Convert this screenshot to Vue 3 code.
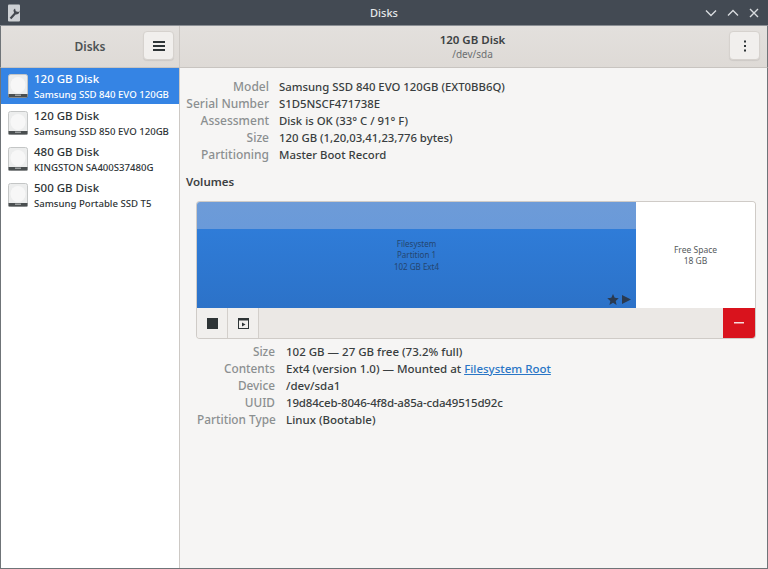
<template>
  <div class="windowFrame">
    <div class="titleBar">
      <div class="appIcon">
        <svg width="16" height="18" viewBox="0 0 16 18">
          <rect x="1" y="0.5" width="12" height="17" rx="1" fill="#ced1d4" />
          <path d="M3.5 14.5 L8.5 9" stroke="#45494f" stroke-width="2.2" fill="none" />
          <path d="M6.5 6 L8 4.5 L8.8 7.2 L11.5 8 L12.5 6.6 Q12.8 10.2 9.6 10.6 Q6.6 10 6.5 6 Z" fill="#45494f" />
        </svg>
      </div>
      <div class="windowTitle">Disks</div>
      <div class="windowControls">
        <svg width="12" height="8" viewBox="0 0 12 8"><path d="M1 1.5 L6 6.5 L11 1.5" class="ctrlStroke" /></svg>
        <svg width="12" height="8" viewBox="0 0 12 8"><path d="M1 6.5 L6 1.5 L11 6.5" class="ctrlStroke" /></svg>
        <svg width="10" height="10" viewBox="0 0 10 10"><path d="M1 1 L9 9 M9 1 L1 9" class="ctrlStroke" /></svg>
      </div>
    </div>

    <div class="headerRow">
      <div class="sideHeader">
        <span class="sideTitle">Disks</span>
        <button class="headerBtn menuBtn">
          <svg width="12" height="10" viewBox="0 0 12 10"><path d="M0 1 H12 M0 5 H12 M0 9 H12" stroke="#2e3436" stroke-width="2" /></svg>
        </button>
      </div>
      <div class="mainHeader">
        <div class="mainTitle">
          <strong>120 GB Disk</strong>
          <span>/dev/sda</span>
        </div>
        <button class="headerBtn dotsBtn">
          <svg width="4" height="12" viewBox="0 0 4 12">
            <rect x="1" y="0.5" width="2" height="2" fill="#2e3436" />
            <rect x="1" y="5" width="2" height="2" fill="#2e3436" />
            <rect x="1" y="9.5" width="2" height="2" fill="#2e3436" />
          </svg>
        </button>
      </div>
    </div>

    <div class="bodyRow">
      <div class="diskList">
        <div v-for="(disk, i) in disks" :key="i" class="diskRow" :class="{ selected: i === 0 }">
          <svg class="diskIcon" width="20" height="24" viewBox="0 0 20 24">
            <rect x="0.5" y="0.5" width="19" height="23" rx="2" fill="#eceded" stroke="#c4c6c6" />
            <ellipse cx="10" cy="11" rx="7.5" ry="8" fill="#f7f7f7" />
            <rect x="0.5" y="20" width="19" height="3.5" fill="#4a4f50" />
            <rect x="7" y="20.5" width="6" height="1.5" fill="#9a9d9e" />
          </svg>
          <div class="diskText">
            <div class="diskName">{{ disk.name }}</div>
            <div class="diskModel">{{ disk.model }}</div>
          </div>
        </div>
      </div>

      <div class="contentPane">
        <div class="infoGrid driveGrid">
          <template v-for="row in driveInfo" :key="row[0]">
            <span class="infoLabel">{{ row[0] }}</span>
            <span class="infoValue">{{ row[1] }}</span>
          </template>
        </div>

        <div class="volumesTitle">Volumes</div>

        <div class="volumeBox">
          <div class="volumeGraph">
            <div class="partUsed">
              <div class="usedTop"></div>
              <div class="usedBottom">
                <div class="partLabel">Filesystem<br />Partition 1<br />102 GB Ext4</div>
                <div class="partIcons">
                  <svg width="12" height="11" viewBox="0 0 24 23"><path d="M12 0 L15.5 8 L24 8.8 L17.6 14.5 L19.5 23 L12 18.5 L4.5 23 L6.4 14.5 L0 8.8 L8.5 8 Z" fill="#2a3a50" /></svg>
                  <svg width="9" height="9" viewBox="0 0 9 9"><path d="M0 0 L9 4.5 L0 9 Z" fill="#2a3a50" /></svg>
                </div>
              </div>
            </div>
            <div class="partFree">Free Space<br />18 GB</div>
          </div>
          <div class="volumeTools">
            <button class="toolBtn">
              <svg width="11" height="11" viewBox="0 0 11 11"><rect width="11" height="11" fill="#2e3436" /></svg>
            </button>
            <button class="toolBtn">
              <svg width="11" height="11" viewBox="0 0 11 11">
                <rect x="0.5" y="0.5" width="10" height="10" fill="none" stroke="#2e3436" />
                <rect width="11" height="2.5" fill="#2e3436" />
                <path d="M4 4.5 L7.5 6.5 L4 8.5 Z" fill="#2e3436" />
              </svg>
            </button>
            <div class="toolSpacer"></div>
            <button class="deleteBtn">
              <svg width="10" height="2" viewBox="0 0 10 2"><rect width="10" height="1.5" fill="#f6dcdc" /></svg>
            </button>
          </div>
        </div>

        <div class="infoGrid volumeGrid">
          <span class="infoLabel">Size</span>
          <span class="infoValue">102 GB — 27 GB free (73.2% full)</span>
          <span class="infoLabel">Contents</span>
          <span class="infoValue">Ext4 (version 1.0) — Mounted at <a class="linkText">Filesystem Root</a></span>
          <span class="infoLabel">Device</span>
          <span class="infoValue">/dev/sda1</span>
          <span class="infoLabel">UUID</span>
          <span class="infoValue uuidText">19d84ceb-8046-4f8d-a85a-cda49515d92c</span>
          <span class="infoLabel">Partition Type</span>
          <span class="infoValue">Linux (Bootable)</span>
        </div>
      </div>
    </div>
  </div>
</template>

<script setup>
const disks = [
  { name: '120 GB Disk', model: 'Samsung SSD 840 EVO 120GB' },
  { name: '120 GB Disk', model: 'Samsung SSD 850 EVO 120GB' },
  { name: '480 GB Disk', model: 'KINGSTON SA400S37480G' },
  { name: '500 GB Disk', model: 'Samsung Portable SSD T5' }
]

const driveInfo = [
  ['Model', 'Samsung SSD 840 EVO 120GB (EXT0BB6Q)'],
  ['Serial Number', 'S1D5NSCF471738E'],
  ['Assessment', 'Disk is OK (33° C / 91° F)'],
  ['Size', '120 GB (1,20,03,41,23,776 bytes)'],
  ['Partitioning', 'Master Boot Record']
]
</script>

<style>
html,
body {
  margin: 0;
  background: #f6f5f4;
}
</style>

<style scoped>
.windowFrame {
  width: 768px;
  height: 569px;
  display: flex;
  flex-direction: column;
  overflow: hidden;
  font-family: 'Noto Sans', sans-serif;
  font-size: 12px;
  color: #2e3436;
  background: #f6f5f4;
}

/* title bar */
.titleBar {
  height: 25px;
  flex: none;
  background: #434a53;
  border-bottom: 1px solid #8b8f94;
  display: flex;
  align-items: center;
  position: relative;
}

.appIcon {
  margin-left: 7px;
  display: flex;
}

.windowTitle {
  position: absolute;
  left: 0;
  right: 0;
  text-align: center;
  color: #e6e8ea;
  font-size: 11px;
  font-weight: 500;
}

.windowControls {
  margin-left: auto;
  margin-right: 9px;
  display: flex;
  align-items: center;
  gap: 10px;
  position: relative;
}

.ctrlStroke {
  stroke: #d8dbde;
  stroke-width: 1.4;
  fill: none;
}

/* header */
.headerRow {
  height: 41px;
  flex: none;
  display: flex;
  background: linear-gradient(#e3e0dd, #dedad6);
  border-bottom: 1px solid #c8c4c0;
  border-left: 1px solid #6f7478;
  border-right: 1px solid #6f7478;
}

.sideHeader {
  width: 179px;
  box-sizing: border-box;
  flex: none;
  display: flex;
  align-items: center;
  justify-content: center;
  position: relative;
  border-right: 1px solid #cdc9c5;
}

.sideTitle {
  font-size: 12px;
  font-weight: 600;
  color: #4d5254;
}

.headerBtn {
  position: absolute;
  width: 31px;
  height: 29px;
  padding: 0;
  background: #f1efed;
  border: 1px solid #d6d2ce;
  border-radius: 4px;
  box-shadow: 0 1px 1px rgba(0, 0, 0, 0.08);
  display: flex;
  align-items: center;
  justify-content: center;
}

.menuBtn {
  right: 5px;
  top: 5px;
}

.mainHeader {
  flex: 1;
  display: flex;
  align-items: center;
  justify-content: center;
  position: relative;
}

.mainTitle {
  display: flex;
  flex-direction: column;
  align-items: center;
  line-height: 15px;
  margin-right: 2px;
}

.mainTitle strong {
  font-size: 11.5px;
  font-weight: 600;
  color: #3c4143;
}

.mainTitle span {
  font-size: 10px;
  color: #6b6f70;
}

.dotsBtn {
  right: 7px;
  top: 5px;
}

/* body */
.bodyRow {
  flex: 1;
  display: flex;
  min-height: 0;
  border-left: 1px solid #6f7478;
  border-right: 1px solid #6f7478;
  border-bottom: 1px solid #6f7478;
}

.diskList {
  width: 178px;
  flex: none;
  background: #fff;
  border-right: 1px solid #cdc9c5;
}

.diskRow {
  height: 36.4px;
  display: flex;
  align-items: center;
  box-sizing: border-box;
  padding-left: 7px;
  color: #2e3436;
}

.diskRow.selected {
  background: #3584e4;
  color: #fff;
}

.diskIcon {
  flex: none;
  margin-right: 6px;
}

.diskName {
  font-size: 11.5px;
  font-weight: 500;
  line-height: 17px;
}

.diskModel {
  font-size: 9.6px;
  font-weight: 500;
  line-height: 15px;
  white-space: nowrap;
}

.contentPane {
  flex: 1;
  min-width: 0;
  padding: 10px 11px 0 6px;
}

.infoGrid {
  display: grid;
  grid-auto-rows: 17px;
  column-gap: 10px;
  align-items: center;
  font-size: 11.5px;
  line-height: 17px;
}

.driveGrid {
  grid-template-columns: 83px auto;
  font-size: 11.35px;
}

.driveGrid .infoLabel {
  font-size: 12px;
}

.volumeGrid {
  grid-template-columns: 78px auto;
  padding-left: 11px;
  margin-top: 5px;
  column-gap: 11px;
}

.volumeGrid .infoLabel {
  font-size: 11.8px;
}

.infoLabel {
  text-align: right;
  color: #8b8f90;
  font-weight: 500;
  white-space: nowrap;
}

.infoValue {
  color: #393e40;
  font-weight: 500;
  white-space: nowrap;
}

.uuidText {
  letter-spacing: -0.17px;
}

.linkText {
  color: #2a76c6;
  text-decoration: underline;
}

.volumesTitle {
  margin-top: 10px;
  font-size: 11.5px;
  font-weight: 600;
  color: #3c4143;
  line-height: 17px;
}

/* volume graph */
.volumeBox {
  margin: 12px 0 0 11px;
  width: 558px;
  height: 136px;
  display: flex;
  flex-direction: column;
  border-radius: 3px;
  box-shadow: 0 0 0 1px #cfcbc7;
  overflow: hidden;
}

.volumeGraph {
  height: 106px;
  flex: none;
  display: flex;
}

.partUsed {
  width: 439px;
  flex: none;
  display: flex;
  flex-direction: column;
}

.usedTop {
  height: 27px;
  flex: none;
  background: linear-gradient(#6d9bd8, #6a9ad9);
}

.usedBottom {
  flex: 1;
  position: relative;
  background: linear-gradient(#2f7cd8, #2c72c8);
  display: flex;
  align-items: center;
  justify-content: center;
}

.partLabel {
  margin-top: -27px;
  text-align: center;
  font-size: 8px;
  line-height: 11.5px;
  color: #24456f;
}

.partIcons {
  position: absolute;
  right: 5px;
  bottom: 3px;
  display: flex;
  align-items: center;
  gap: 3px;
}

.partFree {
  flex: 1;
  background: #fff;
  display: flex;
  align-items: center;
  justify-content: center;
  text-align: center;
  font-size: 8.5px;
  line-height: 11.5px;
  color: #55595b;
}

.volumeTools {
  flex: 1;
  display: flex;
  background: #ebe8e5;
}

.toolBtn {
  width: 31px;
  padding: 0;
  background: #f1efed;
  border: none;
  border-right: 1px solid #d3cfcb;
  display: flex;
  align-items: center;
  justify-content: center;
}

.toolSpacer {
  flex: 1;
}

.deleteBtn {
  width: 32px;
  padding: 0;
  background: #d9131d;
  border: none;
  display: flex;
  align-items: center;
  justify-content: center;
}
</style>
